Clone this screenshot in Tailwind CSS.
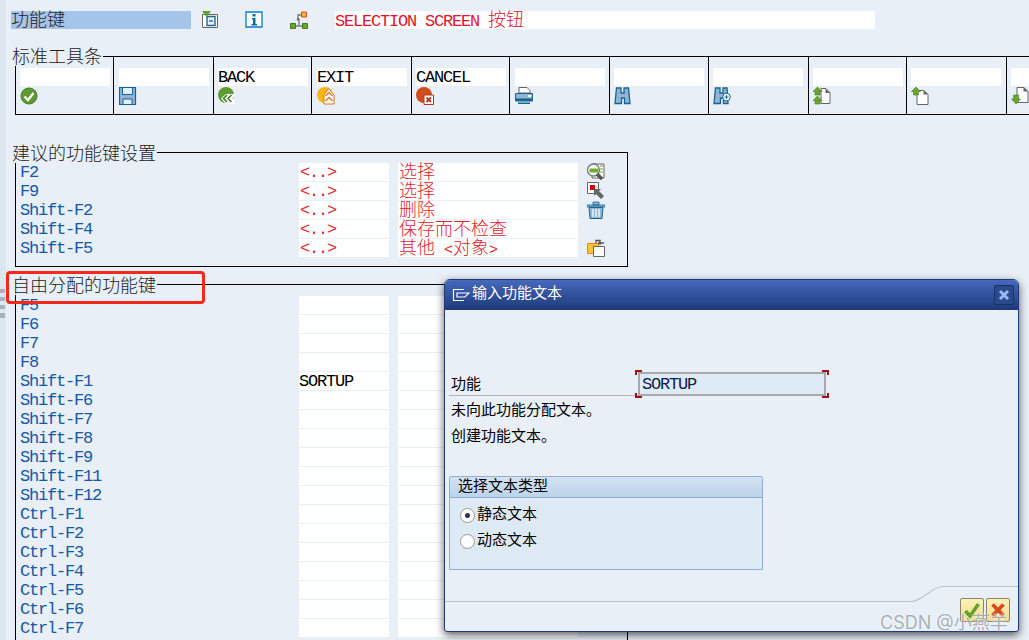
<!DOCTYPE html>
<html lang="zh">

<head>
    <meta charset="UTF-8">
    <script src="https://cdn.jsdelivr.net/npm/@tailwindcss/browser@4"></script>
    <title>功能键</title>
</head>

<body class="bg-[#e8eff7]">
    <div class="relative flex w-[1029px] h-[640px] overflow-hidden bg-[#e8eff7] text-[15px] leading-[18px] text-[#222] font-['Liberation_Mono','Noto_Sans_CJK_SC',monospace]">
        <!--Left rail-->
        <div class="relative w-[6px] shrink-0 bg-[#dde7f0]">
            <div class="absolute left-0 top-[289px] flex flex-col gap-[4px]">
                <div class="w-[5px] h-[4px] bg-[#a9b2bb]"></div>
                <div class="w-[5px] h-[4px] bg-[#a9b2bb]"></div>
                <div class="w-[5px] h-[4px] bg-[#a9b2bb]"></div>
                <div class="w-[5px] h-[5px] bg-[#a9b2bb]"></div>
            </div>
        </div>

        <div class="flex flex-col w-[1023px] shrink-0">
            <!--Top Section-->
            <div class="flex shrink-0 mt-[11px] h-[18px] ml-[5px]">
                <div class="w-[180px] h-[18px] bg-[#a4c4e9] text-[18px] leading-[20px] font-light">功能键</div>
                <svg class="ml-[10px] w-[18px] h-[18px]" viewBox="0 0 18 18">
                    <path d="M1.500 3.500h15v13h-15z" fill="#fff" stroke="#666"/>
                    <path d="M6 5.500h8v9H6z" fill="#e8eff7" stroke="#1a6a9a" stroke-width="1.400"/>
                    <path d="M8 10h4" stroke="#1a6a9a" stroke-width="1.400"/>
                    <path d="M1 0h9L5.500 6z" fill="#5f9e2f"/>
                </svg>
                <svg class="ml-[26px] w-[18px] h-[18px]" viewBox="0 0 18 18">
                    <path d="M1 1h16v15H1z" fill="#fff" stroke="#0b7cc4" stroke-width="1.300"/>
                    <path d="M7.500 3h3v2.500h-3zM7 7h3.500v6H12v1.500H6.500V13H8V8.500H7z" fill="#0a6aa8"/>
                </svg>
                <svg class="ml-[27px] w-[18px] h-[18px]" viewBox="0 0 18 18">
                    <path d="M5 15h8M9 8v6M11 4H8v5" stroke="#777" stroke-width="1.300" fill="none"/>
                    <path d="M6.500 7.500 8 10l1.500-2.500z" fill="#555"/>
                    <path d="M11.500 1h5v5h-5z" fill="#f9b233" stroke="#d9501e"/>
                    <path d="M.5 12.500h5v5h-5zM12.500 12.500h5v5h-5z" fill="#6aa62f" stroke="#3f7a1e"/>
                </svg>
                <div class="ml-[27px] w-[540px] h-[18px] bg-white text-[#e0142c] whitespace-nowrap"><span class="text-[17px] tracking-[-1.2px]">SELECTION SCREEN</span> <span class="text-[18px] leading-[20px] font-light">按钮</span></div>
            </div>

            <!--Standard toolbar-->
            <div class="relative shrink-0 mt-[27px] ml-[9px] h-[59px] w-[1040px] border-y border-l border-black flex">
                <div class="absolute -left-[4px] -top-[9px] pr-[1px] h-[18px] bg-[#e8eff7] text-[18px] leading-[20px] font-light">标准工具条</div>
                <div class="w-[97px] h-full pl-[4px] pt-[11px]">
                    <div class="w-[90px] h-[18px] bg-white"></div>
                    <svg class="mt-[1px] w-[18px] h-[18px]" viewBox="0 0 18 18">
                        <circle cx="9" cy="9" r="8" fill="#5f9a33" stroke="#44802a"/>
                        <path d="M4.500 9.500 8 13l5.500-7" fill="none" stroke="#fff" stroke-width="2.200"/>
                    </svg>
                </div>
                <div class="w-[100px] h-full pl-[5px] pt-[11px] border-l border-black">
                    <div class="w-[90px] h-[18px] bg-white"></div>
                    <svg class="mt-[1px] w-[18px] h-[18px]" viewBox="0 0 18 18">
                        <path d="M.5.500h16v17H.5z" fill="#8fb4d6" stroke="#17648f" stroke-width="1.200"/>
                        <path d="M3.500.5h10v7h-10z" fill="#e8eff7" stroke="#17648f"/>
                        <path d="M4 12h9v5.500H4z" fill="#e8eff7" stroke="#17648f"/>
                    </svg>
                </div>
                <div class="w-[98px] h-full pl-[4px] pt-[11px] border-l border-black">
                    <div class="w-[90px] h-[18px] pt-[1px] bg-white whitespace-nowrap text-[17px] tracking-[-1.2px] text-black">BACK</div>
                    <svg class="mt-[1px] w-[18px] h-[18px]" viewBox="0 0 18 18">
                        <circle cx="8" cy="8" r="8" fill="#5f9a33"/>
                        <path d="M3 11.500 8 7h9.500l-3 4.500 3 5.500H8z" fill="#fff"/>
                        <path d="M9 8l-3.500 3.500L9 15M13.500 8 10 11.500l3.500 3.500" fill="none" stroke="#3f7a1e" stroke-width="1.500"/>
                    </svg>
                </div>
                <div class="w-[100px] h-full pl-[5px] pt-[11px] border-l border-black">
                    <div class="w-[90px] h-[18px] pt-[1px] bg-white whitespace-nowrap text-[17px] tracking-[-1.2px] text-black">EXIT</div>
                    <svg class="mt-[1px] w-[18px] h-[18px]" viewBox="0 0 18 18">
                        <circle cx="8" cy="8" r="8" fill="#fdb515"/>
                        <path d="M11.500 1.500 17 8v9H7V8z" fill="#fff" stroke="#e8741e"/>
                        <path d="M8.500 9 12 5.500 15.500 9M8.500 14 12 10.500 15.500 14" fill="none" stroke="#e8741e" stroke-width="1.400"/>
                    </svg>
                </div>
                <div class="w-[98px] h-full pl-[4px] pt-[11px] border-l border-black">
                    <div class="w-[90px] h-[18px] pt-[1px] bg-white whitespace-nowrap text-[17px] tracking-[-1.2px] text-black">CANCEL</div>
                    <svg class="mt-[1px] w-[18px] h-[18px]" viewBox="0 0 18 18">
                        <circle cx="8" cy="8" r="8" fill="#cf4f1c"/>
                        <path d="M8 8h9.500v9.500H8z" fill="#fff" stroke="#b8321a"/>
                        <path d="M10.500 10.500l4.500 4.500M15 10.500 10.500 15" stroke="#b8321a" stroke-width="1.800"/>
                    </svg>
                </div>
                <div class="w-[100px] h-full pl-[5px] pt-[11px] border-l border-black">
                    <div class="w-[90px] h-[18px] bg-white"></div>
                    <svg class="mt-[1px] w-[18px] h-[18px]" viewBox="0 0 18 18">
                        <path d="M4 .5h8l3 3V6H4z" fill="#fff" stroke="#666"/>
                        <path d="M.5 6.500h17V14H.5z" fill="#8fb4d6" stroke="#17648f"/>
                        <path d="M13 8h3v2h-3z" fill="#fff"/>
                        <path d="M.5 11.500h17V14H.5zM3 15.500h12V17H3z" fill="#17648f"/>
                    </svg>
                </div>
                <div class="w-[99px] h-full pl-[4px] pt-[11px] border-l border-black">
                    <div class="w-[90px] h-[18px] bg-white"></div>
                    <svg class="mt-[1px] w-[18px] h-[18px]" viewBox="0 0 18 18">
                        <path d="M2.500 1H7v5h3V1h4.500L16 16.500h-5.500V11h-3v5.500H1z" fill="#8fb4d6" stroke="#17648f" stroke-width="1.300"/>
                    </svg>
                </div>
                <div class="w-[100px] h-full pl-[4px] pt-[11px] border-l border-black">
                    <div class="w-[90px] h-[18px] bg-white"></div>
                    <svg class="mt-[1px] w-[18px] h-[18px]" viewBox="0 0 18 18">
                        <path d="M2.500 1H7v5h3V1h4L15 16.500h-4.500V11h-3v5.500H1z" fill="#8fb4d6" stroke="#17648f" stroke-width="1.300"/>
                        <circle cx="13.500" cy="10" r="3.800" fill="#fff" stroke="#17648f"/>
                        <path d="M13.500 8v4M11.500 10h4" stroke="#17648f"/>
                    </svg>
                </div>
                <div class="w-[98px] h-full pl-[4px] pt-[11px] border-l border-black">
                    <div class="w-[90px] h-[18px] bg-white"></div>
                    <svg class="mt-[1px] w-[18px] h-[18px]" viewBox="0 0 18 18">
                        <path d="M8 1.500h5l4 4v11H8z" fill="#fff" stroke="#666"/>
                        <path d="M12.500 1.500 17 6h-4.500z" fill="#666"/>
                        <path d="M4.500 0 9 4.500H7V8H2V4.500H0zM4.500 9 9 13.500H7V17H2v-3.500H0z" fill="#6aa62f" stroke="#3f7a1e" stroke-width=".6"/>
                    </svg>
                </div>
                <div class="w-[100px] h-full pl-[4px] pt-[11px] border-l border-black">
                    <div class="w-[90px] h-[18px] bg-white"></div>
                    <svg class="mt-[1px] w-[18px] h-[18px]" viewBox="0 0 18 18">
                        <path d="M6 3.500h7l4 4v10H6z" fill="#fff" stroke="#666"/>
                        <path d="M12.500 3 17 7.500h-4.500z" fill="#666"/>
                        <path d="M5 0l4.500 4.500H7.500V8h-5V4.500H.5z" fill="#6aa62f" stroke="#3f7a1e" stroke-width=".6"/>
                    </svg>
                </div>
                <div class="w-[40px] h-full pl-[4px] pt-[11px] border-l border-black">
                    <div class="w-[90px] h-[18px] bg-white"></div>
                    <svg class="mt-[1px] w-[18px] h-[18px]" viewBox="0 0 18 18">
                        <path d="M6 .5h7l4 4v11H6z" fill="#fff" stroke="#666"/>
                        <path d="M12.500 0 17 4.500h-4.500z" fill="#666"/>
                        <path d="M2.500 8h5v4h2L5 17 .5 12h2z" fill="#6aa62f" stroke="#3f7a1e" stroke-width=".6"/>
                    </svg>
                </div>
            </div>

            <!--Suggested keys-->
            <div class="relative shrink-0 mt-[37px] ml-[9px] w-[613px] h-[115px] border border-black pt-[10px] pl-[4px]">
                <div class="absolute -left-[4px] -top-[8px] pr-[1px] h-[18px] bg-[#e8eff7] text-[18px] leading-[20px] font-light">建议的功能键设置</div>
                <div class="flex h-[19px] text-[#e0242c]">
                    <div class="w-[279px] pt-[1px] text-[17px] tracking-[-1.2px] text-[#1558a8]">F2</div>
                    <div class="w-[90px] h-[18px] pl-[1px] pt-[1px] text-[17px] tracking-[-1.2px] bg-white">&lt;..&gt;</div>
                    <div class="ml-[9px] w-[180px] h-[18px] pl-[1px] bg-white text-[18px] leading-[20px] font-light">选择</div>
                    <svg class="ml-[9px] w-[18px] h-[18px]" viewBox="0 0 18 18">
                        <path d="M5 1h12v14H5z" fill="#fff" stroke="#666"/>
                        <circle cx="6.500" cy="7" r="6" fill="#fff" stroke="#777" stroke-width="1.300"/>
                        <path d="M2.500 5.500h9v4h-9z" fill="#72ab2c"/>
                        <path d="M13 3h3M13 6h3M13 9h3" stroke="#72ab2c"/>
                        <path d="M10 11l5 5" stroke="#555" stroke-width="3.500"/>
                    </svg>
                </div>
                <div class="flex h-[19px] text-[#e0242c]">
                    <div class="w-[279px] pt-[1px] text-[17px] tracking-[-1.2px] text-[#1558a8]">F9</div>
                    <div class="w-[90px] h-[18px] pl-[1px] pt-[1px] text-[17px] tracking-[-1.2px] bg-white">&lt;..&gt;</div>
                    <div class="ml-[9px] w-[180px] h-[18px] pl-[1px] bg-white text-[18px] leading-[20px] font-light">选择</div>
                    <svg class="ml-[9px] w-[18px] h-[18px]" viewBox="0 0 18 18">
                        <path d="M.5.500h11v11H.5z" fill="#fff" stroke="#666"/>
                        <path d="M3 3h5v5H3z" fill="#c80000"/>
                        <path d="M7 7h7l-2 2 5 5-3 3-5-5-2 2z" fill="#666"/>
                    </svg>
                </div>
                <div class="flex h-[19px] text-[#e0242c]">
                    <div class="w-[279px] pt-[1px] text-[17px] tracking-[-1.2px] text-[#1558a8]">Shift-F2</div>
                    <div class="w-[90px] h-[18px] pl-[1px] pt-[1px] text-[17px] tracking-[-1.2px] bg-white">&lt;..&gt;</div>
                    <div class="ml-[9px] w-[180px] h-[18px] pl-[1px] bg-white text-[18px] leading-[20px] font-light">删除</div>
                    <svg class="ml-[9px] w-[18px] h-[18px]" viewBox="0 0 18 18">
                        <path d="M0 4h18v2H0zM6 1h6v3H6z" fill="#8fb4d6" stroke="#17648f" stroke-width=".8"/>
                        <path d="M2 6.500h14l-1 11H3z" fill="#8fb4d6" stroke="#17648f"/>
                        <path d="M6 8v8M9 8v8M12 8v8" stroke="#fff" stroke-width="1.300"/>
                    </svg>
                </div>
                <div class="flex h-[19px] text-[#e0242c]">
                    <div class="w-[279px] pt-[1px] text-[17px] tracking-[-1.2px] text-[#1558a8]">Shift-F4</div>
                    <div class="w-[90px] h-[18px] pl-[1px] pt-[1px] text-[17px] tracking-[-1.2px] bg-white">&lt;..&gt;</div>
                    <div class="ml-[9px] w-[180px] h-[18px] pl-[1px] bg-white text-[18px] leading-[20px] font-light">保存而不检查</div>
                </div>
                <div class="flex h-[19px] text-[#e0242c]">
                    <div class="w-[279px] pt-[1px] text-[17px] tracking-[-1.2px] text-[#1558a8]">Shift-F5</div>
                    <div class="w-[90px] h-[18px] pl-[1px] pt-[1px] text-[17px] tracking-[-1.2px] bg-white">&lt;..&gt;</div>
                    <div class="ml-[9px] w-[180px] h-[18px] pl-[1px] bg-white whitespace-nowrap"><span class="text-[18px] leading-[20px] font-light">其他</span> &lt;<span class="text-[18px] leading-[20px] font-light">对象</span>&gt;</div>
                    <svg class="ml-[9px] w-[18px] h-[18px]" viewBox="0 0 18 18">
                        <path d="M.5 4.500h11v10H.5z" fill="#fdc52c" stroke="#e8841e"/>
                        <path d="M6.500 7.500h11v10h-11z" fill="#fff" stroke="#666"/>
                        <path d="M9 4V1.500h4V6M11 4h6" fill="none" stroke="#555" stroke-width="1.300"/>
                    </svg>
                </div>
            </div>

            <!--Free keys-->
            <div class="relative shrink-0 mt-[17px] ml-[9px] w-[613px] h-[400px] border border-black pt-[11px] pl-[4px] text-[17px] tracking-[-1.2px]">
                <div class="absolute -left-[4px] -top-[8px] pr-[1px] h-[18px] bg-[#e8eff7] text-[18px] leading-[20px] tracking-normal font-light">自由分配的功能键</div>
                <div class="flex h-[19px]"><div class="w-[279px] pt-[1px] text-[#1558a8]">F5</div><div class="w-[90px] h-[18px] bg-white"></div><div class="ml-[9px] w-[180px] h-[18px] bg-white"></div></div>
                <div class="flex h-[19px]"><div class="w-[279px] pt-[1px] text-[#1558a8]">F6</div><div class="w-[90px] h-[18px] bg-white"></div><div class="ml-[9px] w-[180px] h-[18px] bg-white"></div></div>
                <div class="flex h-[19px]"><div class="w-[279px] pt-[1px] text-[#1558a8]">F7</div><div class="w-[90px] h-[18px] bg-white"></div><div class="ml-[9px] w-[180px] h-[18px] bg-white"></div></div>
                <div class="flex h-[19px]"><div class="w-[279px] pt-[1px] text-[#1558a8]">F8</div><div class="w-[90px] h-[18px] bg-white"></div><div class="ml-[9px] w-[180px] h-[18px] bg-white"></div></div>
                <div class="flex h-[19px]"><div class="w-[279px] pt-[1px] text-[#1558a8]">Shift-F1</div><div class="w-[90px] h-[18px] pt-[1px] bg-white text-black">SORTUP</div><div class="ml-[9px] w-[180px] h-[18px] bg-white"></div></div>
                <div class="flex h-[19px]"><div class="w-[279px] pt-[1px] text-[#1558a8]">Shift-F6</div><div class="w-[90px] h-[18px] bg-white"></div><div class="ml-[9px] w-[180px] h-[18px] bg-white"></div></div>
                <div class="flex h-[19px]"><div class="w-[279px] pt-[1px] text-[#1558a8]">Shift-F7</div><div class="w-[90px] h-[18px] bg-white"></div><div class="ml-[9px] w-[180px] h-[18px] bg-white"></div></div>
                <div class="flex h-[19px]"><div class="w-[279px] pt-[1px] text-[#1558a8]">Shift-F8</div><div class="w-[90px] h-[18px] bg-white"></div><div class="ml-[9px] w-[180px] h-[18px] bg-white"></div></div>
                <div class="flex h-[19px]"><div class="w-[279px] pt-[1px] text-[#1558a8]">Shift-F9</div><div class="w-[90px] h-[18px] bg-white"></div><div class="ml-[9px] w-[180px] h-[18px] bg-white"></div></div>
                <div class="flex h-[19px]"><div class="w-[279px] pt-[1px] text-[#1558a8]">Shift-F11</div><div class="w-[90px] h-[18px] bg-white"></div><div class="ml-[9px] w-[180px] h-[18px] bg-white"></div></div>
                <div class="flex h-[19px]"><div class="w-[279px] pt-[1px] text-[#1558a8]">Shift-F12</div><div class="w-[90px] h-[18px] bg-white"></div><div class="ml-[9px] w-[180px] h-[18px] bg-white"></div></div>
                <div class="flex h-[19px]"><div class="w-[279px] pt-[1px] text-[#1558a8]">Ctrl-F1</div><div class="w-[90px] h-[18px] bg-white"></div><div class="ml-[9px] w-[180px] h-[18px] bg-white"></div></div>
                <div class="flex h-[19px]"><div class="w-[279px] pt-[1px] text-[#1558a8]">Ctrl-F2</div><div class="w-[90px] h-[18px] bg-white"></div><div class="ml-[9px] w-[180px] h-[18px] bg-white"></div></div>
                <div class="flex h-[19px]"><div class="w-[279px] pt-[1px] text-[#1558a8]">Ctrl-F3</div><div class="w-[90px] h-[18px] bg-white"></div><div class="ml-[9px] w-[180px] h-[18px] bg-white"></div></div>
                <div class="flex h-[19px]"><div class="w-[279px] pt-[1px] text-[#1558a8]">Ctrl-F4</div><div class="w-[90px] h-[18px] bg-white"></div><div class="ml-[9px] w-[180px] h-[18px] bg-white"></div></div>
                <div class="flex h-[19px]"><div class="w-[279px] pt-[1px] text-[#1558a8]">Ctrl-F5</div><div class="w-[90px] h-[18px] bg-white"></div><div class="ml-[9px] w-[180px] h-[18px] bg-white"></div></div>
                <div class="flex h-[19px]"><div class="w-[279px] pt-[1px] text-[#1558a8]">Ctrl-F6</div><div class="w-[90px] h-[18px] bg-white"></div><div class="ml-[9px] w-[180px] h-[18px] bg-white"></div></div>
                <div class="flex h-[19px]"><div class="w-[279px] pt-[1px] text-[#1558a8]">Ctrl-F7</div><div class="w-[90px] h-[18px] bg-white"></div><div class="ml-[9px] w-[180px] h-[18px] bg-white"></div></div>
            </div>
        </div>

        <!--Red annotation-->
        <div class="absolute left-[6px] top-[271px] w-[199px] h-[33px] border-[3px] border-[#f5281e] rounded-[4px]"></div>

        <!--Dialog-->
        <div class="absolute left-[444px] top-[279px] w-[575px] h-[353px] bg-[#e8eff7] border border-[#1f3a74] rounded-t-[6px] rounded-b-[3px] shadow-[0_3px_8px_rgba(0,0,0,0.65)] text-black">
            <div class="flex items-center h-[30px] pl-[7px] pr-[4px] rounded-t-[5px] bg-gradient-to-b from-[#4569bd] to-[#1e3a7a] text-white">
                <svg class="w-[18px] h-[14px]" viewBox="0 0 18 14">
                    <path d="M12 1.500H1.500v11H12M5 5h12l-4 4H5z" fill="none" stroke="#fff" stroke-width="1.200"/>
                </svg>
                <div class="ml-[2px] whitespace-nowrap">输入功能文本</div>
                <div class="ml-auto flex items-center justify-center w-[20px] h-[20px] bg-[#2a4a8e] border border-[#1a3166] rounded-[2px]">
                    <svg class="w-[12px] h-[12px]" viewBox="0 0 12 12">
                        <path d="M2 2l8 8M10 2l-8 8" stroke="#9cb9f5" stroke-width="3"/>
                    </svg>
                </div>
            </div>

            <div class="flex mt-[62px] ml-[4px] h-[24px]">
                <div class="w-[189px] h-[24px] pl-[2px] pt-[5px] border-b border-[#b5b5b5]">功能</div>
                <div class="relative w-[188px] h-[24px] pl-[2px] pt-[2px] border-2 border-[#a8a8a8] bg-[#deeaf5] text-[17px] tracking-[-1.2px] text-[#10204a]">
                    SORTUP
                    <div class="absolute -left-[5px] -top-[4px] w-[7px] h-[5px] border-t-2 border-l-2 border-[#a01010]"></div>
                    <div class="absolute -right-[5px] -top-[4px] w-[7px] h-[5px] border-t-2 border-r-2 border-[#a01010]"></div>
                    <div class="absolute -left-[5px] -bottom-[4px] w-[7px] h-[5px] border-b-2 border-l-2 border-[#a01010]"></div>
                    <div class="absolute -right-[5px] -bottom-[4px] w-[7px] h-[5px] border-b-2 border-r-2 border-[#a01010]"></div>
                </div>
            </div>
            <div class="mt-[3px] ml-[6px] h-[26px] leading-[26px]">未向此功能分配文本。</div>
            <div class="ml-[6px] h-[26px] leading-[26px]">创建功能文本。</div>

            <div class="mt-[25px] ml-[4px] w-[314px] h-[94px] border border-[#8fb0d4] rounded-t-[2px] bg-[#dde9f3]">
                <div class="h-[21px] pl-[8px] pt-[2px] bg-gradient-to-b from-[#d3e2f1] to-[#bcd3ea] border-b border-[#8fb0d4]">选择文本类型</div>
                <div class="flex items-center h-[26px] mt-[4px] pl-[10px]">
                    <div class="flex items-center justify-center w-[15px] h-[15px] rounded-full border border-[#999] bg-white">
                        <div class="w-[5px] h-[5px] rounded-full bg-[#334]"></div>
                    </div>
                    <div class="ml-[2px] pt-[1px]">静态文本</div>
                </div>
                <div class="flex items-center h-[26px] pl-[10px]">
                    <div class="w-[15px] h-[15px] rounded-full border border-[#999] bg-white"></div>
                    <div class="ml-[2px] pt-[1px]">动态文本</div>
                </div>
            </div>

            <svg class="absolute left-0 top-[305px] w-[573px] h-[18px]" viewBox="0 0 573 18">
                <path d="M0 16.500H466c12 0 20-15 32-15H573" fill="none" stroke="#b9c3cf" stroke-width="1.200"/>
            </svg>

            <div class="flex justify-end gap-[2px] mt-[28px] pr-[8px]">
                <div class="flex items-center justify-center w-[24px] h-[24px] border border-[#8a8468] rounded-[2px] bg-gradient-to-b from-[#fdf0b8] to-[#f3dc92]">
                    <svg class="w-[18px] h-[18px]" viewBox="0 0 18 18">
                        <path d="M2.500 10 7 15l8.500-12" fill="none" stroke="#5fa52a" stroke-width="3.600"/>
                    </svg>
                </div>
                <div class="flex items-center justify-center w-[24px] h-[24px] border border-[#8a8468] rounded-[2px] bg-gradient-to-b from-[#fdf0b8] to-[#f3dc92]">
                    <svg class="w-[16px] h-[16px]" viewBox="0 0 16 16">
                        <path d="M2.500 2.500l11 11M13.500 2.500l-11 11" stroke="#d9481e" stroke-width="3.800"/>
                    </svg>
                </div>
            </div>
        </div>

        <!--Watermark-->
        <div class="absolute left-[880px] top-[612px] whitespace-nowrap text-[18px] leading-[22px] text-[#8e979f]/75 font-['Inter','Noto_Sans_CJK_SC',sans-serif] [text-shadow:0_0_2px_#fff]">CSDN @小燕羊</div>
    </div>
</body>

</html>
